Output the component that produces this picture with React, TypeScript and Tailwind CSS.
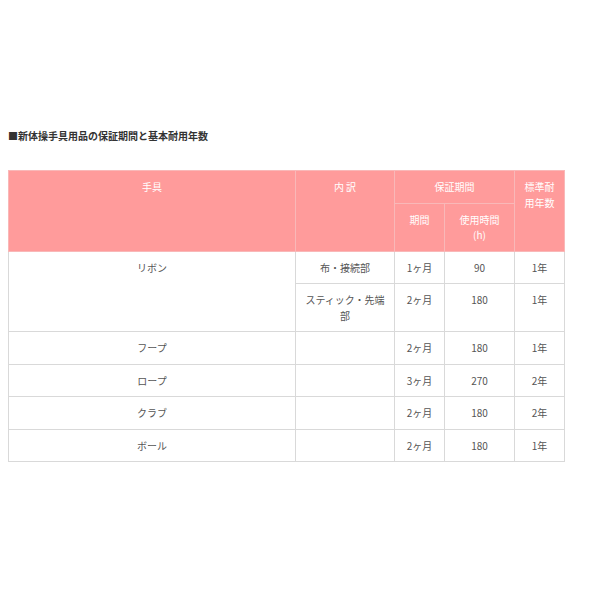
import React from "react";

const th = "border border-[#f9b8b8] bg-[#ff9b9b] text-white font-normal align-top px-2 py-2 text-center";
const td = "border border-[#d9d9d9] align-top px-2 py-2 text-center text-[#555]";

export default function App() {
  const rows: [string, string, string, string][] = [
    ["フープ", "2ヶ月", "180", "1年"],
    ["ロープ", "3ヶ月", "270", "2年"],
    ["クラブ", "2ヶ月", "180", "2年"],
    ["ボール", "2ヶ月", "180", "1年"],
  ];
  return (
    <div
      className="w-[600px] h-[600px] bg-white px-2 pt-[128px] text-[10px] leading-[15.5px]"
      style={{ fontFamily: '"Noto Sans CJK JP", "Noto Sans", sans-serif' }}
    >
      <div className="font-bold text-[#333] text-[10px] leading-4">■新体操手具用品の保証期間と基本耐用年数</div>
      <table className="mt-[26px] w-[556px] table-fixed border-collapse">
        <colgroup>
          <col className="w-[287px]" />
          <col className="w-[99px]" />
          <col className="w-[50px]" />
          <col className="w-[70px]" />
          <col className="w-[50px]" />
        </colgroup>
        <thead>
          <tr>
            <th rowSpan={2} className={th}>手具</th>
            <th rowSpan={2} className={th}>内 訳</th>
            <th colSpan={2} className={th}>保証期間</th>
            <th rowSpan={2} className={th}>標準耐用年数</th>
          </tr>
          <tr>
            <th className={th}>期間</th>
            <th className={th}>
              使用時間
              <br />
              (h)
            </th>
          </tr>
        </thead>
        <tbody>
          <tr>
            <td rowSpan={2} className={td}>リボン</td>
            <td className={td}>布・接続部</td>
            <td className={td}>1ヶ月</td>
            <td className={td}>90</td>
            <td className={td}>1年</td>
          </tr>
          <tr>
            <td className={td}>スティック・先端部</td>
            <td className={td}>2ヶ月</td>
            <td className={td}>180</td>
            <td className={td}>1年</td>
          </tr>
          {rows.map((r) => (
            <tr key={r[0]}>
              <td className={td}>{r[0]}</td>
              <td className={td}></td>
              <td className={td}>{r[1]}</td>
              <td className={td}>{r[2]}</td>
              <td className={td}>{r[3]}</td>
            </tr>
          ))}
        </tbody>
      </table>
    </div>
  );
}
